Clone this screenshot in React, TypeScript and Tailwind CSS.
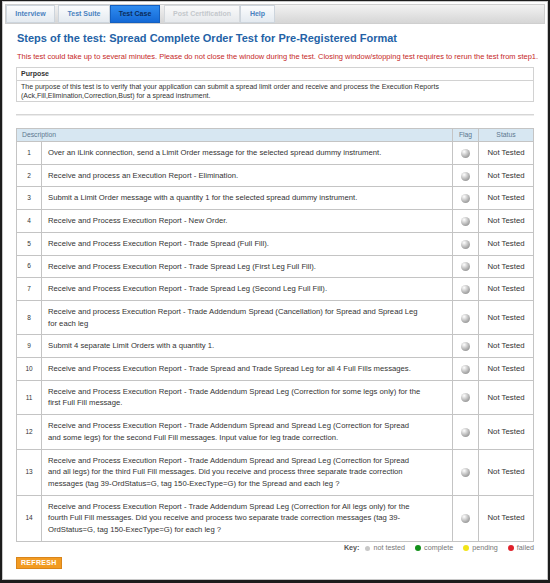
import React from 'react';

const steps: string[][] = [
  ['Over an iLink connection, send a Limit Order message for the selected spread dummy instrument.'],
  ['Receive and process an Execution Report - Elimination.'],
  ['Submit a Limit Order message with a quantity 1 for the selected spread dummy instrument.'],
  ['Receive and Process Execution Report - New Order.'],
  ['Receive and Process Execution Report - Trade Spread (Full Fill).'],
  ['Receive and Process Execution Report - Trade Spread Leg (First Leg Full Fill).'],
  ['Receive and Process Execution Report - Trade Spread Leg (Second Leg Full Fill).'],
  [
    'Receive and process Execution Report - Trade Addendum Spread (Cancellation) for Spread and Spread Leg',
    'for each leg',
  ],
  ['Submit 4 separate Limit Orders with a quantity 1.'],
  ['Receive and Process Execution Report - Trade Spread and Trade Spread Leg for all 4 Full Fills messages.'],
  [
    'Receive and Process Execution Report - Trade Addendum Spread Leg (Correction for some legs only) for the',
    'first Full Fill message.',
  ],
  [
    'Receive and Process Execution Report - Trade Addendum Spread and Spread Leg (Correction for Spread',
    'and some legs) for the second Full Fill messages. Input value for leg trade correction.',
  ],
  [
    'Receive and Process Execution Report - Trade Addendum Spread and Spread Leg (Correction for Spread',
    'and all legs) for the third Full Fill messages. Did you receive and process three separate trade correction',
    'messages (tag 39-OrdStatus=G, tag 150-ExecType=G) for the Spread and each leg ?',
  ],
  [
    'Receive and Process Execution Report - Trade Addendum Spread Leg (Correction for All legs only) for the',
    'fourth Full Fill messages. Did you receive and process two separate trade correction messages (tag 39-',
    'OrdStatus=G, tag 150-ExecType=G) for each leg ?',
  ],
];

const tabBase = 'h-[18px] flex items-center justify-center text-[7px] font-bold border';
const tabs = [
  { label: 'Interview', cls: 'w-[49px] text-[#4a82c0] bg-gradient-to-b from-[#fbfcfd] to-[#e4eaf0] border-[#cdd5dd]' },
  { label: 'Test Suite', cls: 'w-[52px] ml-[3px] text-[#4a82c0] bg-gradient-to-b from-[#fbfcfd] to-[#e4eaf0] border-[#cdd5dd]' },
  { label: 'Test Case', cls: 'w-[50px] text-[#0b2c5a] bg-gradient-to-b from-[#2f8cf0] to-[#1469d6] border-[#1460c0]' },
  { label: 'Post Certification', cls: 'w-[76px] ml-[4px] text-[#c4c8cc] bg-gradient-to-b from-[#fafafa] to-[#e6e9ec] border-[#d4d8dc]' },
  { label: 'Help', cls: 'w-[35px] text-[#4a82c0] bg-gradient-to-b from-[#fbfcfd] to-[#e4eaf0] border-[#cdd5dd]' },
];

const Bulb: React.FC = () => (
  <span className="inline-block w-[9px] h-[9px] rounded-full bg-[radial-gradient(circle_at_35%_30%,#ffffff,#b4b4b4_55%,#7c7c7c)]" />
);

const App: React.FC = () => {
  return (
    <div
      className="w-[550px] h-[583px] bg-[#1c1c1c] pl-[2px] pr-[2px] pt-[1px] pb-[3px]"
      style={{ fontFamily: '"Liberation Sans", Arial, sans-serif' }}
    >
      <div className="h-full bg-white border border-[#c8c8c8] px-[2px] pt-[2px]">
        {/* tab bar */}
        <div className="h-[20px] flex items-end bg-gradient-to-b from-[#f2f2f2] to-[#d6d6d6] border border-[#cfcfcf]">
          {tabs.map((t) => (
            <div key={t.label} className={`${tabBase} ${t.cls}`}>
              {t.label}
            </div>
          ))}
        </div>

        <div className="px-[11px]">
          <h1 className="mt-[8px] pl-px text-[11px] leading-[12px] font-bold text-[#2462a6]">
            Steps of the test: Spread Complete Order Test for Pre-Registered Format
          </h1>
          <p className="mt-[8px] pl-px text-[7.5px] leading-[9px] text-[#c62828] whitespace-nowrap">
            This test could take up to several minutes. Please do not close the window during the test. Closing
            window/stopping test requires to rerun the test from step1.
          </p>

          {/* purpose */}
          <div className="mt-[6px] border border-[#d2d2d2]">
            <div className="h-[13px] px-[4px] flex items-center border-b border-[#d2d2d2] text-[7px] font-bold text-[#333]">
              Purpose
            </div>
            <div className="px-[4px] pt-[2px] pb-[1px] text-[7px] leading-[8.5px] text-[#333]">
              The purpose of this test is to verify that your application can submit a spread limit order and receive
              and process the Execution Reports
              <br />
              (Ack,Fill,Elimination,Correction,Bust) for a spread instrument.
            </div>
          </div>

          <div className="mt-[12px] h-[2px] bg-[#d6d6d6] border-b border-[#ececec]" />

          {/* steps table */}
          <table className="mt-[12px] w-full border-collapse border border-[#c4c4c4] text-[#333]">
            <thead>
              <tr className="bg-[#d7e7f2] text-[6.8px] text-[#5d7890]">
                <th colSpan={2} className="h-[13px] px-[5px] text-left font-normal border border-[#c4c4c4]">
                  Description
                </th>
                <th className="w-[26px] font-normal border border-[#c4c4c4]">Flag</th>
                <th className="w-[55px] font-normal border border-[#c4c4c4]">Status</th>
              </tr>
            </thead>
            <tbody>
              {steps.map((lines, i) => (
                <tr key={i}>
                  <td className="w-[25px] text-center text-[6.5px] border border-[#c4c4c4]">{i + 1}</td>
                  <td className="pl-[6px] pr-[4px] py-[5px] text-[7.7px] leading-[11.7px] border border-[#c4c4c4]">
                    {lines.map((l, j) => (
                      <React.Fragment key={j}>
                        {j > 0 && <br />}
                        {l}
                      </React.Fragment>
                    ))}
                  </td>
                  <td className="text-center border border-[#c4c4c4] leading-none">
                    <Bulb />
                  </td>
                  <td className="text-center text-[7.8px] whitespace-nowrap border border-[#c4c4c4]">Not Tested</td>
                </tr>
              ))}
            </tbody>
          </table>

          {/* key */}
          <div className="mt-[2px] h-[9px] flex justify-end items-center gap-[3px] text-[7.2px] text-[#777]">
            <span className="font-bold text-[#555] mr-[3px]">Key:</span>
            <span className="w-[5px] h-[5px] rounded-full bg-[#c8c8c8]" />
            <span className="mr-[7px]">not tested</span>
            <span className="w-[6px] h-[6px] rounded-full bg-[#13911b]" />
            <span className="mr-[7px]">complete</span>
            <span className="w-[6px] h-[6px] rounded-full bg-[#f2e418]" />
            <span className="mr-[7px]">pending</span>
            <span className="w-[6px] h-[6px] rounded-full bg-[#e0202a]" />
            <span>failed</span>
          </div>

          <button className="block mt-[4px] h-[12px] px-[4px] bg-[#f29b22] border border-[#d9851a] text-white text-[7px] font-bold tracking-[0.3px] leading-none">
            REFRESH
          </button>
        </div>
      </div>
    </div>
  );
};

export default App;
